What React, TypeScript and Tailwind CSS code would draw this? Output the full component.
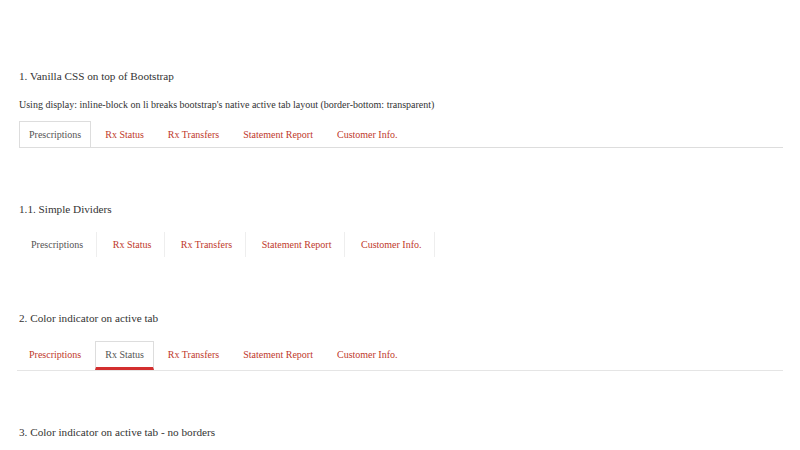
const tabs = ['Prescriptions', 'Rx Status', 'Rx Transfers', 'Statement Report', 'Customer Info.'];

function Heading({ children, className = '' }: { children: React.ReactNode; className?: string }) {
  return <h4 className={`text-[11.2px] leading-[20px] text-[#333] ${className}`}>{children}</h4>;
}

export default function App() {
  return (
    <div className="min-h-screen bg-white px-[19px] pt-[66px] font-['Liberation_Serif','Times_New_Roman',serif]">
      {/* 1. Vanilla */}
      <Heading>1. Vanilla CSS on top of Bootstrap</Heading>
      <p className="mt-[11px] text-[10px] leading-[16px] text-[#333]">
        Using display: inline-block on li breaks bootstrap's native active tab layout (border-bottom: transparent)
      </p>
      <ul className="mt-[8px] flex gap-[4px] border-b border-[#ddd] mr-[-2px]">
        {tabs.map((t, i) => (
          <li
            key={t}
            className={`h-[26px] flex items-center text-[10px] ${
              i === 0 ? 'border border-b-0 border-[#ddd] text-[#555] px-[9px]' : 'px-[10px] text-[#c0392b]'
            }`}
          >
            {t}
          </li>
        ))}
      </ul>

      {/* 1.1 Simple dividers */}
      <Heading className="mt-[51px]">1.1. Simple Dividers</Heading>
      <ul className="mt-[13px] ml-[-1px] flex gap-[3px]">
        {tabs.map((t, i) => (
          <li
            key={t}
            className={`h-[25px] pl-[13px] pr-[12.5px] flex items-center border-r border-[#eee] text-[10px] ${
              i === 0 ? 'text-[#555]' : 'text-[#c0392b]'
            }`}
          >
            {t}
          </li>
        ))}
      </ul>

      {/* 2. Color indicator */}
      <Heading className="mt-[51px]">2. Color indicator on active tab</Heading>
      <ul className="mt-[13px] mx-[-2px] px-[2px] flex gap-[4px] border-b border-[#e5e5e5]">
        {tabs.map((t, i) => (
          <li
            key={t}
            className={`h-[29px] flex items-center text-[10px] border-b-[3px] ${
              i === 1
                ? 'border-x border-t border-x-[#ddd] border-t-[#ddd] border-b-[#d32f2f] px-[9px] text-[#555]'
                : 'border-b-transparent px-[10px] text-[#c0392b]'
            }`}
          >
            {t}
          </li>
        ))}
      </ul>

      {/* 3. No borders */}
      <Heading className="mt-[51px]">3. Color indicator on active tab - no borders</Heading>
    </div>
  );
}
